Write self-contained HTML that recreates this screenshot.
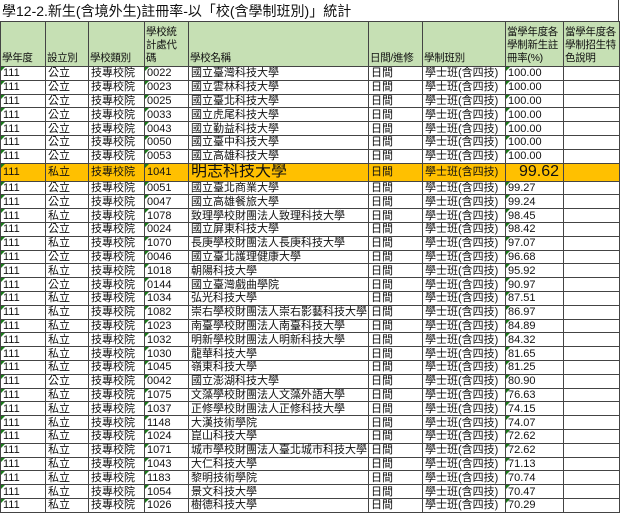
<!DOCTYPE html>
<html><head><meta charset="utf-8"><style>
body{margin:0;width:624px;height:505px;overflow:hidden;background:#fff;font-family:"Liberation Sans","Noto Sans CJK TC",sans-serif;color:#111;position:relative}
.title{position:absolute;left:0;top:0;width:619px;height:22px;border-right:1px solid #444;font-size:14px;line-height:22px;padding-left:2px;box-sizing:border-box}
table{position:absolute;left:0;top:21px;border-collapse:collapse;table-layout:fixed;font-size:11px}
td{border:1px solid #444;padding:0 0 0 2px;height:12.8px;line-height:12px;white-space:nowrap;overflow:hidden;position:relative}
tr.h td{background:#c6e0b4;height:43px;vertical-align:bottom;padding:0 0 1px 1px}
tr.h td div{max-height:43px;overflow:hidden;line-height:13px;font-size:10.5px;white-space:normal;word-break:break-all;letter-spacing:-0.3px}
tr.y td{background:#ffc000;height:17px}
tr.y td.b{font-size:16px}
tr.y td.n{font-size:16px;text-align:right;padding-right:4px}
td.g::before{content:"";position:absolute;left:0;top:0;border-top:4px solid #1a7a1a;border-right:4px solid transparent}
</style></head><body>
<div class="title">學12-2.新生(含境外生)註冊率-以「校(含學制班別)」統計</div>
<table>
<colgroup><col style="width:45px"><col style="width:43px"><col style="width:56px"><col style="width:44px"><col style="width:180px"><col style="width:54px"><col style="width:83px"><col style="width:58px"><col style="width:56px"></colgroup>
<tr class="h"><td><div>學年度</div></td><td><div>設立別</div></td><td><div>學校類別</div></td><td><div style="width:33px">學校統計處代碼</div></td><td><div>學校名稱</div></td><td><div>日間/進修</div></td><td><div>學制班別</div></td><td><div>當學年度各學制新生註冊率(%)</div></td><td><div>當學年度各學制招生特色說明</div></td></tr>
<tr><td class="g">111</td><td>公立</td><td>技專校院</td><td class="g">0022</td><td>國立臺灣科技大學</td><td>日間</td><td>學士班(含四技)</td><td class="g">100.00</td><td></td></tr>
<tr><td class="g">111</td><td>公立</td><td>技專校院</td><td class="g">0023</td><td>國立雲林科技大學</td><td>日間</td><td>學士班(含四技)</td><td class="g">100.00</td><td></td></tr>
<tr><td class="g">111</td><td>公立</td><td>技專校院</td><td class="g">0025</td><td>國立臺北科技大學</td><td>日間</td><td>學士班(含四技)</td><td class="g">100.00</td><td></td></tr>
<tr><td class="g">111</td><td>公立</td><td>技專校院</td><td class="g">0033</td><td>國立虎尾科技大學</td><td>日間</td><td>學士班(含四技)</td><td class="g">100.00</td><td></td></tr>
<tr><td class="g">111</td><td>公立</td><td>技專校院</td><td class="g">0043</td><td>國立勤益科技大學</td><td>日間</td><td>學士班(含四技)</td><td class="g">100.00</td><td></td></tr>
<tr><td class="g">111</td><td>公立</td><td>技專校院</td><td class="g">0050</td><td>國立臺中科技大學</td><td>日間</td><td>學士班(含四技)</td><td class="g">100.00</td><td></td></tr>
<tr><td class="g">111</td><td>公立</td><td>技專校院</td><td class="g">0053</td><td>國立高雄科技大學</td><td>日間</td><td>學士班(含四技)</td><td class="g">100.00</td><td></td></tr>
<tr class="y"><td class="g">111</td><td>私立</td><td>技專校院</td><td class="g">1041</td><td class="b">明志科技大學</td><td>日間</td><td>學士班(含四技)</td><td class="n">99.62</td><td></td></tr>
<tr><td class="g">111</td><td>公立</td><td>技專校院</td><td class="g">0051</td><td>國立臺北商業大學</td><td>日間</td><td>學士班(含四技)</td><td class="g">99.27</td><td></td></tr>
<tr><td class="g">111</td><td>公立</td><td>技專校院</td><td class="g">0047</td><td>國立高雄餐旅大學</td><td>日間</td><td>學士班(含四技)</td><td class="g">99.24</td><td></td></tr>
<tr><td class="g">111</td><td>私立</td><td>技專校院</td><td class="g">1078</td><td>致理學校財團法人致理科技大學</td><td>日間</td><td>學士班(含四技)</td><td class="g">98.45</td><td></td></tr>
<tr><td class="g">111</td><td>公立</td><td>技專校院</td><td class="g">0024</td><td>國立屏東科技大學</td><td>日間</td><td>學士班(含四技)</td><td class="g">98.42</td><td></td></tr>
<tr><td class="g">111</td><td>私立</td><td>技專校院</td><td class="g">1070</td><td>長庚學校財團法人長庚科技大學</td><td>日間</td><td>學士班(含四技)</td><td class="g">97.07</td><td></td></tr>
<tr><td class="g">111</td><td>公立</td><td>技專校院</td><td class="g">0046</td><td>國立臺北護理健康大學</td><td>日間</td><td>學士班(含四技)</td><td class="g">96.68</td><td></td></tr>
<tr><td class="g">111</td><td>私立</td><td>技專校院</td><td class="g">1018</td><td>朝陽科技大學</td><td>日間</td><td>學士班(含四技)</td><td class="g">95.92</td><td></td></tr>
<tr><td class="g">111</td><td>公立</td><td>技專校院</td><td class="g">0144</td><td>國立臺灣戲曲學院</td><td>日間</td><td>學士班(含四技)</td><td class="g">90.97</td><td></td></tr>
<tr><td class="g">111</td><td>私立</td><td>技專校院</td><td class="g">1034</td><td>弘光科技大學</td><td>日間</td><td>學士班(含四技)</td><td class="g">87.51</td><td></td></tr>
<tr><td class="g">111</td><td>私立</td><td>技專校院</td><td class="g">1082</td><td>崇右學校財團法人崇右影藝科技大學</td><td>日間</td><td>學士班(含四技)</td><td class="g">86.97</td><td></td></tr>
<tr><td class="g">111</td><td>私立</td><td>技專校院</td><td class="g">1023</td><td>南臺學校財團法人南臺科技大學</td><td>日間</td><td>學士班(含四技)</td><td class="g">84.89</td><td></td></tr>
<tr><td class="g">111</td><td>私立</td><td>技專校院</td><td class="g">1032</td><td>明新學校財團法人明新科技大學</td><td>日間</td><td>學士班(含四技)</td><td class="g">84.32</td><td></td></tr>
<tr><td class="g">111</td><td>私立</td><td>技專校院</td><td class="g">1030</td><td>龍華科技大學</td><td>日間</td><td>學士班(含四技)</td><td class="g">81.65</td><td></td></tr>
<tr><td class="g">111</td><td>私立</td><td>技專校院</td><td class="g">1045</td><td>嶺東科技大學</td><td>日間</td><td>學士班(含四技)</td><td class="g">81.25</td><td></td></tr>
<tr><td class="g">111</td><td>公立</td><td>技專校院</td><td class="g">0042</td><td>國立澎湖科技大學</td><td>日間</td><td>學士班(含四技)</td><td class="g">80.90</td><td></td></tr>
<tr><td class="g">111</td><td>私立</td><td>技專校院</td><td class="g">1075</td><td>文藻學校財團法人文藻外語大學</td><td>日間</td><td>學士班(含四技)</td><td class="g">76.63</td><td></td></tr>
<tr><td class="g">111</td><td>私立</td><td>技專校院</td><td class="g">1037</td><td>正修學校財團法人正修科技大學</td><td>日間</td><td>學士班(含四技)</td><td class="g">74.15</td><td></td></tr>
<tr><td class="g">111</td><td>私立</td><td>技專校院</td><td class="g">1148</td><td>大漢技術學院</td><td>日間</td><td>學士班(含四技)</td><td class="g">74.07</td><td></td></tr>
<tr><td class="g">111</td><td>私立</td><td>技專校院</td><td class="g">1024</td><td>崑山科技大學</td><td>日間</td><td>學士班(含四技)</td><td class="g">72.62</td><td></td></tr>
<tr><td class="g">111</td><td>私立</td><td>技專校院</td><td class="g">1071</td><td>城市學校財團法人臺北城市科技大學</td><td>日間</td><td>學士班(含四技)</td><td class="g">72.62</td><td></td></tr>
<tr><td class="g">111</td><td>私立</td><td>技專校院</td><td class="g">1043</td><td>大仁科技大學</td><td>日間</td><td>學士班(含四技)</td><td class="g">71.13</td><td></td></tr>
<tr><td class="g">111</td><td>私立</td><td>技專校院</td><td class="g">1183</td><td>黎明技術學院</td><td>日間</td><td>學士班(含四技)</td><td class="g">70.74</td><td></td></tr>
<tr><td class="g">111</td><td>私立</td><td>技專校院</td><td class="g">1054</td><td>景文科技大學</td><td>日間</td><td>學士班(含四技)</td><td class="g">70.47</td><td></td></tr>
<tr><td class="g">111</td><td>私立</td><td>技專校院</td><td class="g">1026</td><td>樹德科技大學</td><td>日間</td><td>學士班(含四技)</td><td class="g">70.29</td><td></td></tr>
</table>
</body></html>
